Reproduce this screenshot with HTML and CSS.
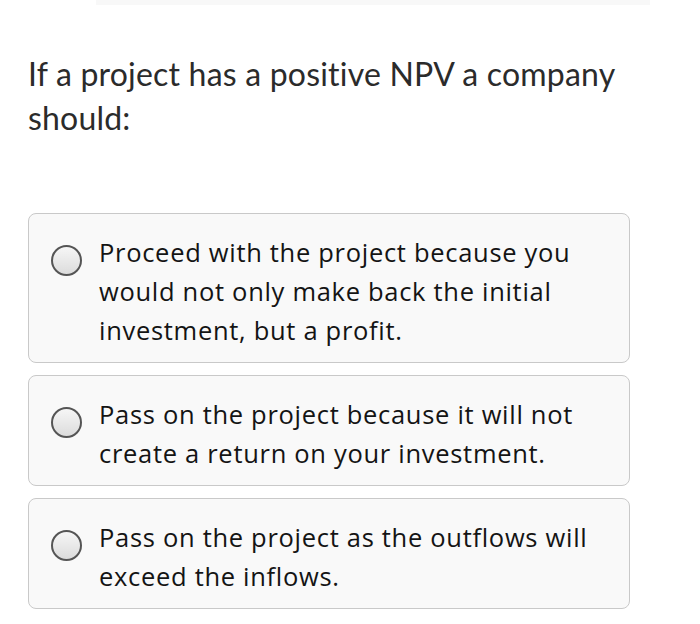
FILE: index.html
```html
<!DOCTYPE html>
<html lang="en">
<head>
<meta charset="utf-8">
<link rel="stylesheet" href="styles.css">
</head>
<body>
<div class="topbar"></div>
<main class="quiz">
  <h1 class="question">If a project has a positive NPV a company should:</h1>
  <div class="options">
    <label class="option">
      <span class="radio"></span>
      <span class="label">Proceed with the project because you would not only make back the initial investment, but a profit.</span>
    </label>
    <label class="option">
      <span class="radio"></span>
      <span class="label">Pass on the project because it will not create a return on your investment.</span>
    </label>
    <label class="option">
      <span class="radio"></span>
      <span class="label">Pass on the project as the outflows will exceed the inflows.</span>
    </label>
  </div>
</main>
</body>
</html>
```

FILE: styles.css
```css
html, body {
  margin: 0;
  padding: 0;
  background: #ffffff;
}

body {
  font-family: Lato, "Liberation Sans", sans-serif;
  color: #222222;
  width: 700px;
  height: 624px;
  overflow: hidden;
}

.topbar {
  margin-left: 96px;
  width: 554px;
  height: 5px;
  background: #f8f8f8;
}

.quiz {
  padding: 0 70px 0 28px;
}

.question {
  margin: 47px 0 0 0;
  font-size: 32px;
  font-weight: 400;
  line-height: 44px;
  letter-spacing: 0.2px;
  color: #2b2b2b;
  width: 600px;
}

.options {
  margin-top: 73px;
  display: flex;
  flex-direction: column;
  gap: 12px;
  width: 602px;
}

.option {
  display: flex;
  align-items: flex-start;
  gap: 17px;
  box-sizing: border-box;
  padding: 19px 20px 12px 22px;
  border: 1.5px solid #c9c9c9;
  border-radius: 8px;
  background: #f9f9f9;
}

.radio {
  flex: none;
  width: 31px;
  height: 31px;
  margin-top: 12px;
  box-sizing: border-box;
  border: 2px solid #555555;
  border-radius: 50%;
  background: linear-gradient(to bottom, #f6f6f6, #dcdcdc);
}

.label {
  font-family: "Open Sans", Lato, sans-serif;
  font-size: 25.5px;
  line-height: 39px;
  letter-spacing: 0.7px;
  color: #141414;
}
```
